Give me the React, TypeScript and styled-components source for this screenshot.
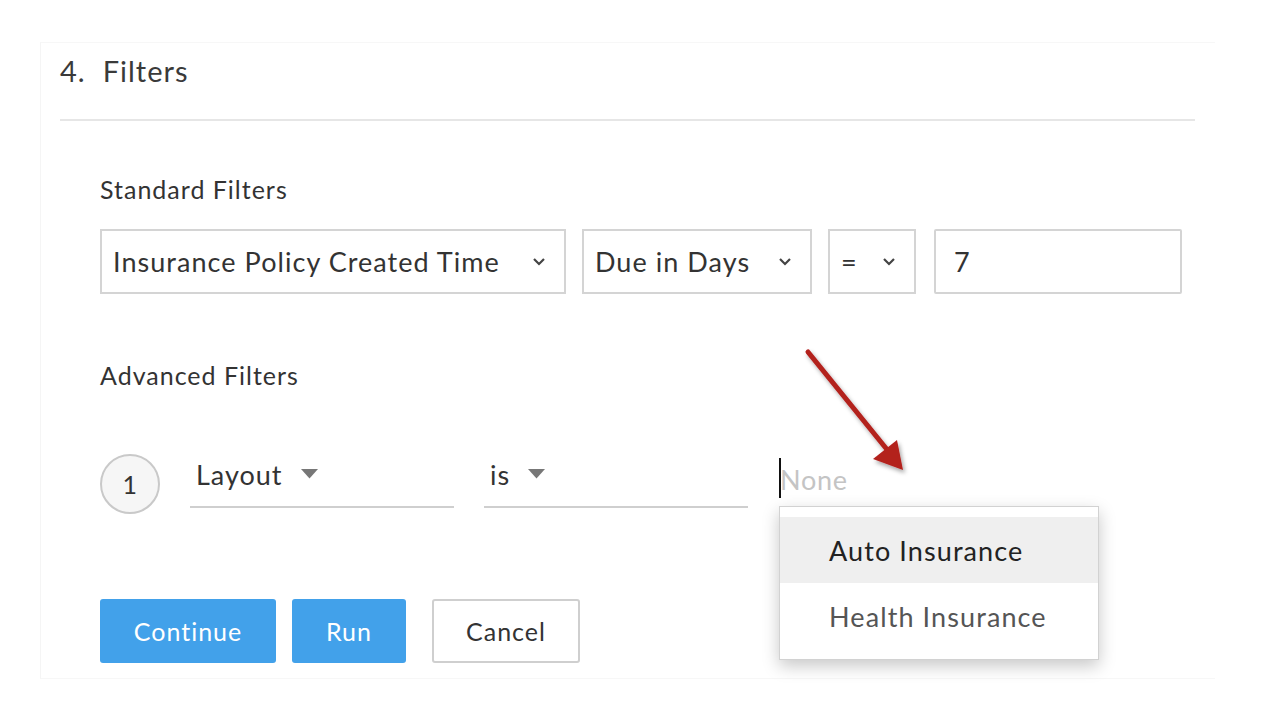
import React from "react";
import styled, { createGlobalStyle } from "styled-components";

const Global = createGlobalStyle`
  html, body { margin: 0; padding: 0; background: #ffffff; }
  body { font-family: Lato, "Open Sans", Arial, sans-serif; color: #333; letter-spacing: 0.7px; }
  * { box-sizing: border-box; }
`;

const Page = styled.div`
  width: 1280px;
  height: 724px;
  padding: 42px 0 0 40px;
  overflow: hidden;
`;

const Panel = styled.div`
  width: 1175px;
  height: 637px;
  border-top: 1px solid #f7f7f7;
  border-left: 1px solid #f5f5f5;
  border-bottom: 1px solid #f7f7f7;
  padding: 0 20px 0 19px;
`;

const Header = styled.div`
  display: flex;
  align-items: center;
  gap: 17px;
  height: 78px;
  border-bottom: 2px solid #e6e6e6;
  font-size: 29px;
  letter-spacing: 1px;
  color: #3a3a3a;
  padding-bottom: 22px;
`;

const Body = styled.div`
  padding: 54px 0 0 40px;
`;

const SectionLabel = styled.div`
  font-size: 25px;
  letter-spacing: 1px;
  color: #333;
  line-height: 28px;
`;

const SelectRow = styled.div`
  display: flex;
  gap: 16px;
  margin-top: 26px;
`;

const SelectBox = styled.div<{ $w: number }>`
  width: ${(p) => p.$w}px;
  height: 65px;
  border: 2px solid #d4d4d4;
  display: flex;
  align-items: center;
  padding: 0 18px 0 11px;
  font-size: 27px;
  letter-spacing: 1.05px;
  color: #333;
  & > span { flex: 1; }
`;

const InputBox = styled(SelectBox)`
  margin-left: 2px;
  border-radius: 2px;
  padding-left: 18px;
`;

const AdvancedLabel = styled(SectionLabel)`
  margin-top: 67px;
`;

const AdvRow = styled.div`
  display: flex;
  align-items: flex-start;
  margin-top: 57px;
`;

const Circle = styled.div`
  width: 60px;
  height: 60px;
  border-radius: 50%;
  border: 2px solid #c9c9c9;
  background: #f6f6f6;
  display: flex;
  align-items: center;
  justify-content: center;
  font-size: 25px;
  color: #333;
  margin-top: 8px;
`;

const Field = styled.div<{ $ml: number }>`
  width: 264px;
  height: 62px;
  margin-left: ${(p) => p.$ml}px;
  border-bottom: 2px solid #cfcfcf;
  display: flex;
  align-items: center;
  gap: 18px;
  padding: 0 0 4px 6px;
  font-size: 27px;
  letter-spacing: 1px;
  color: #333;
`;

const ValueWrap = styled.div`
  position: relative;
  margin-left: 31px;
  margin-top: 11px;
  width: 320px;
  height: 42px;
  display: flex;
  align-items: center;
`;

const Caret = styled.div`
  width: 2px;
  height: 40px;
  background: #111;
`;

const Placeholder = styled.span`
  font-size: 27px;
  color: #c4c4c4;
  margin-left: -1px;
  margin-top: 3px;
`;

const Menu = styled.div`
  position: absolute;
  top: 49px;
  left: 0;
  width: 320px;
  background: #fff;
  border: 1px solid #d2d2d2;
  box-shadow: 0 6px 16px rgba(0, 0, 0, 0.22);
  padding: 10px 0 10px;
  z-index: 2;
`;

const MenuItem = styled.div<{ $active?: boolean }>`
  height: 66px;
  display: flex;
  align-items: center;
  padding-left: 49px;
  font-size: 27px;
  letter-spacing: 1.1px;
  background: ${(p) => (p.$active ? "#efefef" : "#fff")};
  color: ${(p) => (p.$active ? "#222" : "#555")};
`;

const ArrowSvg = styled.svg`
  position: absolute;
  left: 24px;
  top: -110px;
  overflow: visible;
  z-index: 3;
`;

const ButtonRow = styled.div`
  display: flex;
  align-items: center;
  margin-top: 85px;
`;

const Button = styled.button<{ $w: number; $primary?: boolean; $ml?: number }>`
  width: ${(p) => p.$w}px;
  height: 64px;
  margin-left: ${(p) => p.$ml ?? 0}px;
  border-radius: 3px;
  font-family: inherit;
  font-size: 25px;
  letter-spacing: 1px;
  cursor: pointer;
  border: ${(p) => (p.$primary ? "none" : "2px solid #cfcfcf")};
  background: ${(p) => (p.$primary ? "#42a1ea" : "#fff")};
  color: ${(p) => (p.$primary ? "#fff" : "#333")};
`;

const Chevron = () => (
  <svg width="14" height="9" viewBox="0 0 14 9">
    <path d="M2 2 L7 7 L12 2" fill="none" stroke="#444" strokeWidth="2.2" />
  </svg>
);

const Tri = () => (
  <svg width="17" height="10" viewBox="0 0 17 10">
    <path d="M0 0 H17 L8.5 9.5 Z" fill="#777" />
  </svg>
);

export default function App() {
  return (
    <>
      <Global />
      <Page>
        <Panel>
          <Header>
            <span>4.</span>
            <span>Filters</span>
          </Header>
          <Body>
            <SectionLabel>Standard Filters</SectionLabel>
            <SelectRow>
              <SelectBox $w={466}>
                <span>Insurance Policy Created Time</span>
                <Chevron />
              </SelectBox>
              <SelectBox $w={230}>
                <span>Due in Days</span>
                <Chevron />
              </SelectBox>
              <SelectBox $w={88}>
                <span>=</span>
                <Chevron />
              </SelectBox>
              <InputBox $w={248}>
                <span>7</span>
              </InputBox>
            </SelectRow>

            <AdvancedLabel>Advanced Filters</AdvancedLabel>
            <AdvRow>
              <Circle>1</Circle>
              <Field $ml={30}>
                <span>Layout</span>
                <Tri />
              </Field>
              <Field $ml={30}>
                <span>is</span>
                <Tri />
              </Field>
              <ValueWrap>
                <Caret />
                <Placeholder>None</Placeholder>
                <ArrowSvg width="110" height="130" viewBox="0 0 110 130">
                  <defs>
                    <filter id="sh" x="-30%" y="-30%" width="160%" height="160%">
                      <feDropShadow dx="2" dy="3" stdDeviation="2" floodColor="#000" floodOpacity="0.35" />
                    </filter>
                  </defs>
                  <g filter="url(#sh)">
                    <line x1="5" y1="5" x2="86" y2="105" stroke="#b3201f" strokeWidth="5" strokeLinecap="round" />
                    <polygon points="100,123 70,112 94,93" fill="#b3201f" />
                  </g>
                </ArrowSvg>
                <Menu>
                  <MenuItem $active>Auto Insurance</MenuItem>
                  <MenuItem>Health Insurance</MenuItem>
                </Menu>
              </ValueWrap>
            </AdvRow>

            <ButtonRow>
              <Button $w={176} $primary>Continue</Button>
              <Button $w={114} $primary $ml={16}>Run</Button>
              <Button $w={148} $ml={26}>Cancel</Button>
            </ButtonRow>
          </Body>
        </Panel>
      </Page>
    </>
  );
}
